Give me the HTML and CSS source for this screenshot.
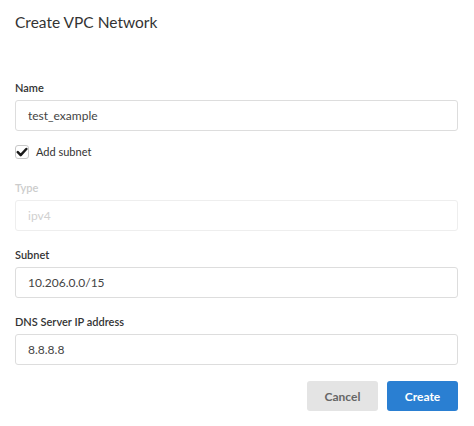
FILE: index.html
```html
<!DOCTYPE html>
<html>
<head>
<meta charset="utf-8">
<link rel="stylesheet" href="styles.css">
</head>
<body>
<div class="dialog">
  <h1 class="title">Create VPC Network</h1>
  <div class="field first">
    <label class="label">Name</label>
    <div class="input">test_example</div>
  </div>
  <div class="check-row">
    <span class="checkbox">
      <svg width="12" height="12" viewBox="0 0 12 12"><path d="M1.8 6.2 L4.7 9.1 L10.3 3" fill="none" stroke="#1a1a1a" stroke-width="2.5" stroke-linecap="round" stroke-linejoin="round"/></svg>
    </span>
    <span class="check-text">Add subnet</span>
  </div>
  <div class="field type disabled">
    <label class="label">Type</label>
    <div class="input">ipv4</div>
  </div>
  <div class="field">
    <label class="label">Subnet</label>
    <div class="input">10.206.0.0/15</div>
  </div>
  <div class="field">
    <label class="label">DNS Server IP address</label>
    <div class="input">8.8.8.8</div>
  </div>
  <div class="actions">
    <button class="btn cancel">Cancel</button>
    <button class="btn create">Create</button>
  </div>
</div>
</body>
</html>
```
FILE: styles.css
```css
html, body {
  margin: 0;
  padding: 0;
  background: #fff;
}
body {
  font-family: Lato, "Open Sans", sans-serif;
  color: #333;
}
.dialog {
  padding: 12px 16px 0 15px;
  display: flex;
  flex-direction: column;
}
.title {
  margin: 0;
  font-size: 15.5px;
  line-height: 20px;
  font-weight: 400;
  color: #333;
}
.field {
  display: flex;
  flex-direction: column;
  margin-top: 16px;
}
.field.first {
  margin-top: 48px;
}
.field.type {
  margin-top: 21px;
}
.label {
  font-size: 11px;
  line-height: 15px;
  font-weight: 600;
  color: #333;
  margin-bottom: 5px;
}
.input {
  box-sizing: border-box;
  height: 31px;
  border: 1px solid #ddd;
  border-radius: 3px;
  padding: 0 12px;
  font-size: 12px;
  line-height: 29px;
  color: #444;
}
.disabled .label {
  color: #ccc;
}
.disabled .input {
  border-color: #eee;
  color: #d0d0d0;
}
.check-row {
  display: flex;
  align-items: center;
  margin-top: 14px;
  height: 14px;
}
.checkbox {
  box-sizing: border-box;
  width: 14px;
  height: 14px;
  border: 1px solid #c8c8c8;
  border-radius: 3px;
  display: flex;
  align-items: center;
  justify-content: center;
}
.check-text {
  margin-left: 7px;
  font-size: 11px;
  line-height: 14px;
  color: #333;
}
.actions {
  display: flex;
  justify-content: flex-end;
  gap: 9px;
  margin-top: 16px;
}
.btn {
  width: 71px;
  height: 30px;
  border: none;
  border-radius: 3px;
  font-family: Lato, "Open Sans", sans-serif;
  font-size: 12px;
  font-weight: 700;
  padding: 0;
}
.cancel {
  background: #e4e4e4;
  color: #666;
}
.create {
  background: #2a7fd2;
  color: #fff;
}
```
